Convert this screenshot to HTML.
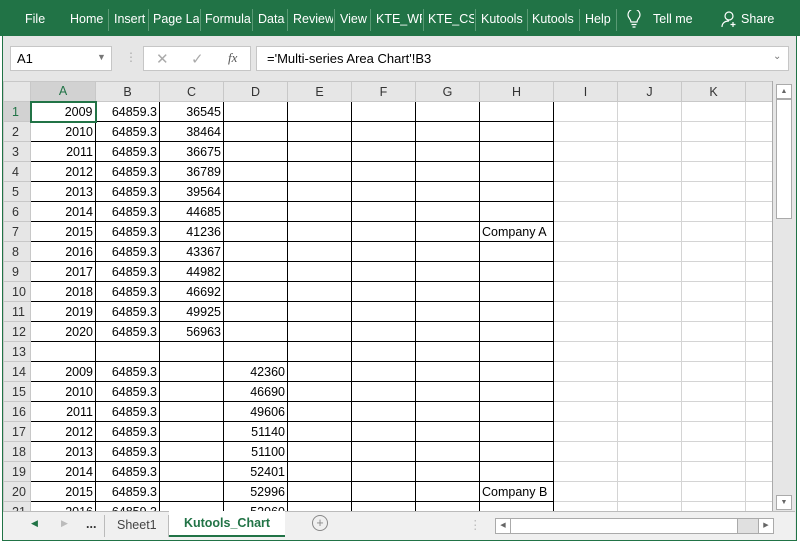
<!DOCTYPE html>
<html><head><meta charset="utf-8"><style>
*{margin:0;padding:0;box-sizing:border-box}
body{width:800px;height:547px;background:#fff;font-family:"Liberation Sans",Arial,sans-serif;position:relative;overflow:hidden}
.a{position:absolute}
#win{left:2px;top:0;width:795px;height:541px;border:1px solid #217346;border-top:none;background:#e6e6e6}
#rib{left:0;top:0;width:800px;height:36px;background:#217346;color:#fff;font-size:12.5px}
#rib span{position:absolute;top:12px;white-space:nowrap;overflow:hidden}
#rib i{position:absolute;top:9px;width:1px;height:22px;background:#5a9a75}
.box{background:#fff;border:1px solid #c6c6c6;font-size:13px}
table{border-collapse:collapse;table-layout:fixed;position:absolute;left:3px;top:81px;font-size:12.5px;background:#fff}
td{height:20px;border:1px solid #d4d4d4;text-align:right;padding:0 2px;white-space:nowrap;overflow:hidden;background:#fff}
tr.h td{background:#e6e6e6;text-align:center;border-color:#c8c8c8;color:#333;height:20px}
td.r{background:#e6e6e6;text-align:left;padding-left:8px;color:#333;border-color:#c8c8c8}
td.b{border:1px solid #000}
</style></head><body>
<div id="win" class="a"></div>
<div id="rib" class="a">
<span style="left:25px">File</span>
<span style="left:70px;width:36px">Home</span><i style="left:108px"></i>
<span style="left:114px;width:33px">Insert</span><i style="left:148px"></i>
<span style="left:153px;width:46px">Page Lay</span><i style="left:200px"></i>
<span style="left:205px;width:46px">Formula</span><i style="left:252px"></i>
<span style="left:258px;width:28px">Data</span><i style="left:287px"></i>
<span style="left:293px;width:40px">Review</span><i style="left:334px"></i>
<span style="left:340px;width:29px">View</span><i style="left:370px"></i>
<span style="left:376px;width:46px">KTE_WR</span><i style="left:423px"></i>
<span style="left:428px;width:46px">KTE_CSH</span><i style="left:475px"></i>
<span style="left:481px;width:45px">Kutools</span><i style="left:527px"></i>
<span style="left:532px;width:46px">Kutools</span><i style="left:579px"></i>
<span style="left:585px;width:30px">Help</span><i style="left:616px"></i>
<svg class="a" style="left:627px;top:10px" width="14" height="18" viewBox="0 0 14 18"><path d="M4 12c0-3-3-4-3-7a6 6 0 0 1 12 0c0 3-3 4-3 7zM4.5 14.5h5M5.5 17h3" fill="none" stroke="#fff" stroke-width="1.2"/></svg>
<span style="left:653px">Tell me</span>
<svg class="a" style="left:721px;top:10px" width="18" height="18" viewBox="0 0 18 18"><circle cx="8" cy="6" r="4" fill="none" stroke="#fff" stroke-width="1.2"/><path d="M1 17c0-4 3-6 7-6M12 12v5M9.5 14.5h5" fill="none" stroke="#fff" stroke-width="1.2"/></svg>
<span style="left:741px">Share</span>
</div>
<div class="a box" style="left:10px;top:46px;width:102px;height:25px;padding:4px 6px">A1<span class="a" style="left:86px;top:5px;font-size:9px;color:#777">▼</span></div>
<div class="a" style="left:125px;top:50px;color:#aaa;font-size:12px">⋮</div>
<div class="a box" style="left:143px;top:46px;width:108px;height:25px;color:#aaa"><span class="a" style="left:12px;top:3px;font-size:15px">✕</span><span class="a" style="left:47px;top:3px;font-size:15px">✓</span><span class="a" style="left:84px;top:3px;font-family:'Liberation Serif';font-style:italic;color:#555">fx</span></div>
<div class="a box" style="left:256px;top:46px;width:533px;height:25px;padding:4px 10px">='Multi-series Area Chart'!B3<span class="a" style="left:516px;top:4px;font-size:10px;color:#777">⌄</span></div>
<table>
<colgroup><col style="width:27px"><col style="width:65px"><col style="width:64px"><col style="width:64px"><col style="width:64px"><col style="width:64px"><col style="width:64px"><col style="width:64px"><col style="width:74px"><col style="width:64px"><col style="width:64px"><col style="width:64px"><col style="width:27px"></colgroup>
<tr class="h"><td style="background:#e6e6e6"></td><td style="background:#d2d2d2;color:#217346;border-bottom:2px solid #217346">A</td><td>B</td><td>C</td><td>D</td><td>E</td><td>F</td><td>G</td><td>H</td><td>I</td><td>J</td><td>K</td><td></td></tr>
<tr><td class="r" style="background:#d2d2d2;color:#217346">1</td><td class="b" style="border:2px solid #217346">2009</td><td class="b">64859.3</td><td class="b">36545</td><td class="b"></td><td class="b"></td><td class="b"></td><td class="b"></td><td class="b"></td><td></td><td></td><td></td><td></td></tr>
<tr><td class="r">2</td><td class="b">2010</td><td class="b">64859.3</td><td class="b">38464</td><td class="b"></td><td class="b"></td><td class="b"></td><td class="b"></td><td class="b"></td><td></td><td></td><td></td><td></td></tr>
<tr><td class="r">3</td><td class="b">2011</td><td class="b">64859.3</td><td class="b">36675</td><td class="b"></td><td class="b"></td><td class="b"></td><td class="b"></td><td class="b"></td><td></td><td></td><td></td><td></td></tr>
<tr><td class="r">4</td><td class="b">2012</td><td class="b">64859.3</td><td class="b">36789</td><td class="b"></td><td class="b"></td><td class="b"></td><td class="b"></td><td class="b"></td><td></td><td></td><td></td><td></td></tr>
<tr><td class="r">5</td><td class="b">2013</td><td class="b">64859.3</td><td class="b">39564</td><td class="b"></td><td class="b"></td><td class="b"></td><td class="b"></td><td class="b"></td><td></td><td></td><td></td><td></td></tr>
<tr><td class="r">6</td><td class="b">2014</td><td class="b">64859.3</td><td class="b">44685</td><td class="b"></td><td class="b"></td><td class="b"></td><td class="b"></td><td class="b"></td><td></td><td></td><td></td><td></td></tr>
<tr><td class="r">7</td><td class="b">2015</td><td class="b">64859.3</td><td class="b">41236</td><td class="b"></td><td class="b"></td><td class="b"></td><td class="b"></td><td class="b" style="text-align:left">Company A</td><td></td><td></td><td></td><td></td></tr>
<tr><td class="r">8</td><td class="b">2016</td><td class="b">64859.3</td><td class="b">43367</td><td class="b"></td><td class="b"></td><td class="b"></td><td class="b"></td><td class="b"></td><td></td><td></td><td></td><td></td></tr>
<tr><td class="r">9</td><td class="b">2017</td><td class="b">64859.3</td><td class="b">44982</td><td class="b"></td><td class="b"></td><td class="b"></td><td class="b"></td><td class="b"></td><td></td><td></td><td></td><td></td></tr>
<tr><td class="r">10</td><td class="b">2018</td><td class="b">64859.3</td><td class="b">46692</td><td class="b"></td><td class="b"></td><td class="b"></td><td class="b"></td><td class="b"></td><td></td><td></td><td></td><td></td></tr>
<tr><td class="r">11</td><td class="b">2019</td><td class="b">64859.3</td><td class="b">49925</td><td class="b"></td><td class="b"></td><td class="b"></td><td class="b"></td><td class="b"></td><td></td><td></td><td></td><td></td></tr>
<tr><td class="r">12</td><td class="b">2020</td><td class="b">64859.3</td><td class="b">56963</td><td class="b"></td><td class="b"></td><td class="b"></td><td class="b"></td><td class="b"></td><td></td><td></td><td></td><td></td></tr>
<tr><td class="r">13</td><td class="b"></td><td class="b"></td><td class="b"></td><td class="b"></td><td class="b"></td><td class="b"></td><td class="b"></td><td class="b"></td><td></td><td></td><td></td><td></td></tr>
<tr><td class="r">14</td><td class="b">2009</td><td class="b">64859.3</td><td class="b"></td><td class="b">42360</td><td class="b"></td><td class="b"></td><td class="b"></td><td class="b"></td><td></td><td></td><td></td><td></td></tr>
<tr><td class="r">15</td><td class="b">2010</td><td class="b">64859.3</td><td class="b"></td><td class="b">46690</td><td class="b"></td><td class="b"></td><td class="b"></td><td class="b"></td><td></td><td></td><td></td><td></td></tr>
<tr><td class="r">16</td><td class="b">2011</td><td class="b">64859.3</td><td class="b"></td><td class="b">49606</td><td class="b"></td><td class="b"></td><td class="b"></td><td class="b"></td><td></td><td></td><td></td><td></td></tr>
<tr><td class="r">17</td><td class="b">2012</td><td class="b">64859.3</td><td class="b"></td><td class="b">51140</td><td class="b"></td><td class="b"></td><td class="b"></td><td class="b"></td><td></td><td></td><td></td><td></td></tr>
<tr><td class="r">18</td><td class="b">2013</td><td class="b">64859.3</td><td class="b"></td><td class="b">51100</td><td class="b"></td><td class="b"></td><td class="b"></td><td class="b"></td><td></td><td></td><td></td><td></td></tr>
<tr><td class="r">19</td><td class="b">2014</td><td class="b">64859.3</td><td class="b"></td><td class="b">52401</td><td class="b"></td><td class="b"></td><td class="b"></td><td class="b"></td><td></td><td></td><td></td><td></td></tr>
<tr><td class="r">20</td><td class="b">2015</td><td class="b">64859.3</td><td class="b"></td><td class="b">52996</td><td class="b"></td><td class="b"></td><td class="b"></td><td class="b" style="text-align:left">Company B</td><td></td><td></td><td></td><td></td></tr>
<tr><td class="r">21</td><td class="b">2016</td><td class="b">64859.3</td><td class="b"></td><td class="b">52960</td><td class="b"></td><td class="b"></td><td class="b"></td><td class="b"></td><td></td><td></td><td></td><td></td></tr>
</table>
<div class="a" style="left:772px;top:81px;width:23px;height:430px;background:#e6e6e6;border-left:1px solid #aaa"></div>
<div class="a" style="left:776px;top:84px;width:16px;height:15px;background:#fff;border:1px solid #aaa;font-size:7px;color:#666;text-align:center;line-height:13px">▲</div>
<div class="a" style="left:776px;top:99px;width:16px;height:120px;background:#fff;border:1px solid #aaa"></div>
<div class="a" style="left:776px;top:495px;width:16px;height:15px;background:#fff;border:1px solid #aaa;font-size:7px;color:#666;text-align:center;line-height:13px">▼</div>
<div class="a" style="left:3px;top:511px;width:792px;height:29px;background:#f0f0f0;border-top:1px solid #bbb;font-size:12.5px">
<span class="a" style="left:28px;top:6px;font-size:9px;color:#217346">◀</span>
<span class="a" style="left:58px;top:6px;font-size:9px;color:#bbb">▶</span>
<span class="a" style="left:83px;top:5px;font-weight:bold;color:#333">...</span>
<i class="a" style="left:101px;top:3px;width:1px;height:22px;background:#bbb"></i>
<span class="a" style="left:114px;top:6px;color:#444">Sheet1</span>
<i class="a" style="left:165px;top:3px;width:1px;height:22px;background:#bbb"></i>
<div class="a" style="left:166px;top:-1px;width:116px;height:26px;background:#fff;border-bottom:2px solid #217346;color:#217346;font-weight:bold;text-align:center;line-height:24px">Kutools_Chart</div>
<span class="a" style="left:309px;top:3px;width:16px;height:16px;border:1px solid #888;border-radius:50%;text-align:center;line-height:14px;color:#888">+</span>
<span class="a" style="left:466px;top:5px;color:#bbb">⋮</span>
<div class="a" style="left:492px;top:6px;width:278px;height:16px;background:#e0e0e0;border:1px solid #aaa"></div>
<div class="a" style="left:492px;top:6px;width:16px;height:16px;background:#fff;border:1px solid #aaa;font-size:7px;color:#666;text-align:center;line-height:14px">◀</div>
<div class="a" style="left:507px;top:6px;width:228px;height:16px;background:#fff;border:1px solid #aaa"></div>
<div class="a" style="left:755px;top:6px;width:16px;height:16px;background:#fff;border:1px solid #aaa;font-size:7px;color:#666;text-align:center;line-height:14px">▶</div>
</div>
</body></html>
